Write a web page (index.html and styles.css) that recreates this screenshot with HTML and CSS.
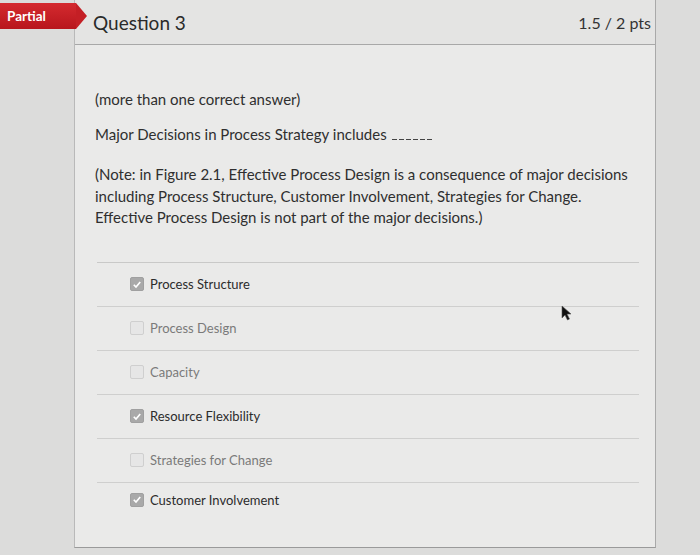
FILE: index.html
```html
<!DOCTYPE html>
<html>
<head>
<meta charset="utf-8">
<link rel="stylesheet" href="styles.css">
</head>
<body>
<div class="badge">Partial</div>
<div class="card">
  <div class="header">
    <span class="title">Question 3</span>
    <span class="pts">1.5 / 2 pts</span>
  </div>
  <div class="content">
    <p class="p1">(more than one correct answer)</p>
    <p class="p2">Major Decisions in Process Strategy includes <span class="blank"></span></p>
    <p class="p3">(Note: in Figure 2.1, Effective Process Design is a consequence of major decisions<br>including Process Structure, Customer Involvement, Strategies for Change.<br>Effective Process Design is not part of the major decisions.)</p>
  </div>
  <div class="answers">
    <div class="ans sel"><span class="box on"><svg viewBox="0 0 13 13" width="13" height="13"><path d="M3 6.8 L5.4 9.2 L10 3.8" fill="none" stroke="#fff" stroke-width="1.8"/></svg></span><span>Process Structure</span></div>
    <div class="ans"><span class="box"></span><span>Process Design</span></div>
    <div class="ans"><span class="box"></span><span>Capacity</span></div>
    <div class="ans sel"><span class="box on"><svg viewBox="0 0 13 13" width="13" height="13"><path d="M3 6.8 L5.4 9.2 L10 3.8" fill="none" stroke="#fff" stroke-width="1.8"/></svg></span><span>Resource Flexibility</span></div>
    <div class="ans"><span class="box"></span><span>Strategies for Change</span></div>
    <div class="ans sel last"><span class="box on"><svg viewBox="0 0 13 13" width="13" height="13"><path d="M3 6.8 L5.4 9.2 L10 3.8" fill="none" stroke="#fff" stroke-width="1.8"/></svg></span><span>Customer Involvement</span></div>
  </div>
</div>
<svg class="cursor" width="12" height="16" viewBox="0 0 12 16"><path d="M1 1 L1 13 L4 10 L6.5 15 L8.5 14 L6 9 L10 9 Z" fill="#111" stroke="#555" stroke-width="0.6"/></svg>
</body>
</html>
```
FILE: styles.css
```css
html, body {
  margin: 0;
  padding: 0;
}
body {
  width: 700px;
  height: 555px;
  overflow: hidden;
  background: #dcdcdb;
  font-family: Lato, "Open Sans", sans-serif;
  color: #2f2f2f;
  position: relative;
}
.badge {
  position: absolute;
  left: 0;
  top: 3px;
  height: 26px;
  width: 76px;
  background: linear-gradient(#d42a2f, #b8161d);
  color: #fff;
  font-weight: bold;
  font-size: 13.5px;
  line-height: 26px;
  padding-left: 7px;
  box-sizing: border-box;
}
.badge::after {
  content: "";
  position: absolute;
  right: -11px;
  top: 0;
  border-top: 13px solid transparent;
  border-bottom: 13px solid transparent;
  border-left: 11px solid #c41f25;
}
.card {
  margin-left: 74px;
  width: 582px;
  height: 548px;
  background: #eaeae9;
  border-left: 1px solid #b9b9b9;
  border-right: 1px solid #a9a9a9;
  border-bottom: 1px solid #9a9a9a;
  box-sizing: border-box;
}
.header {
  height: 45px;
  background: #e4e4e3;
  border-bottom: 1px solid #a8a8a8;
  box-sizing: border-box;
  display: flex;
  justify-content: space-between;
  align-items: center;
  padding: 0 4px 0 18px;
}
.title {
  font-size: 19px;
  color: #2a2a2a;
}
.pts {
  font-size: 16px;
  color: #333;
}
.content {
  padding: 44px 0 0 20px;
  font-size: 15px;
  line-height: 21px;
}
.content p {
  margin: 0;
}
.p2 { margin-top: 14px !important; }
.p3 { margin-top: 19px !important; line-height: 21.5px; }
.blank {
  display: inline-block;
  width: 40px;
  height: 1px;
  margin-left: 2px;
  background: repeating-linear-gradient(90deg, #444 0 5px, transparent 5px 7px);
  vertical-align: baseline;
}
.answers {
  margin: 33px 0 0 22px;
  width: 542px;
  border-top: 1px solid #c9c9c8;
}
.ans {
  height: 44px;
  border-bottom: 1px solid #cfcfce;
  box-sizing: border-box;
  display: flex;
  align-items: center;
  padding-left: 33px;
  font-size: 13px;
  color: #7a7a7a;
}
.ans.sel { color: #2c2c2c; }
.ans.last { border-bottom: none; height: 34px; }
.box {
  width: 12px;
  height: 12px;
  margin-right: 6px;
  border: 1px solid #cfcfcf;
  background: #e6e6e6;
  border-radius: 2px;
  display: flex;
  align-items: center;
  justify-content: center;
  overflow: hidden;
}
.box.on {
  background: #a9a9a9;
  border-color: #a0a0a0;
}
.cursor {
  position: absolute;
  left: 561px;
  top: 305px;
}
```
